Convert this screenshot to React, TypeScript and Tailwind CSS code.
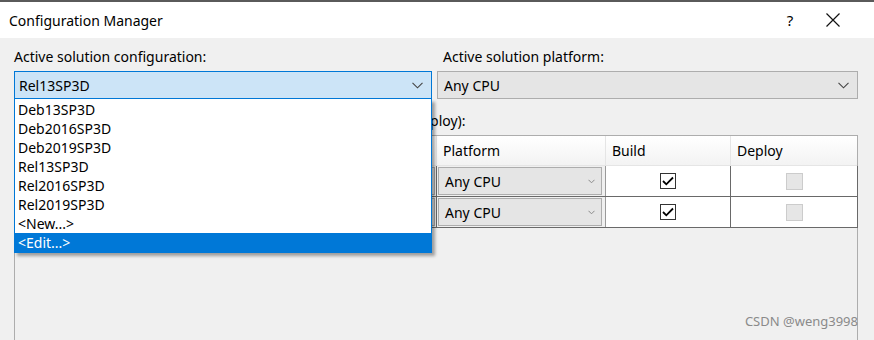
import React from "react";

const font = { fontFamily: '"Noto Sans", "Open Sans", sans-serif' };

function Chevron({ className = "" }: { className?: string }) {
  return (
    <svg width="11" height="7" viewBox="0 0 11 7" className={className}>
      <path d="M0.5 0.8 L5.5 5.8 L10.5 0.8" fill="none" stroke="currentColor" strokeWidth="1.1" />
    </svg>
  );
}

function SmallChevron() {
  return (
    <svg width="7" height="5" viewBox="0 0 7 5" className="text-[#8a8a8a]">
      <path d="M0.5 0.8 L3.5 3.8 L6.5 0.8" fill="none" stroke="currentColor" strokeWidth="1" />
    </svg>
  );
}

function Check() {
  return (
    <div className="w-[16px] h-[16px] border border-[#333] bg-white flex items-center justify-center">
      <svg width="12" height="10" viewBox="0 0 12 10">
        <path d="M1 5 L4.3 8.3 L11 1.5" fill="none" stroke="#000" strokeWidth="1.8" />
      </svg>
    </div>
  );
}

function DisabledBox() {
  return <div className="w-[17px] h-[17px] border border-[#cccccc] bg-[#e6e6e6]" />;
}

const items = ["Deb13SP3D", "Deb2016SP3D", "Deb2019SP3D", "Rel13SP3D", "Rel2016SP3D", "Rel2019SP3D", "<New...>", "<Edit...>"];

function Row() {
  return (
    <div className="flex h-[31px] border-b border-[#696969]">
      <div className="w-[206px] border-r border-[#696969]" />
      <div className="w-[216px] border-r border-[#696969] p-[1px]">
        <div className="h-full border border-[#adadad] bg-[#e5e5e5]" />
      </div>
      <div className="w-[169px] border-r border-[#9a9a9a] pl-[1px] pr-[3px] py-[1px]">
        <div className="h-full border border-[#adadad] bg-[#e5e5e5] flex items-center justify-between pl-[6px] pr-[6px]">
          <span className="text-[14px] text-black">Any CPU</span>
          <SmallChevron />
        </div>
      </div>
      <div className="w-[125px] border-r border-[#696969] bg-white flex items-center justify-center">
        <Check />
      </div>
      <div className="flex-1 bg-white flex items-center justify-center">
        <DisabledBox />
      </div>
    </div>
  );
}

export default function App() {
  return (
    <div className="w-[874px] h-[340px] overflow-hidden bg-[#f0f0f0] relative flex flex-col" style={font}>
      {/* title bar */}
      <div className="h-[38px] bg-white border-t-2 border-[#5a5a5a] flex items-center shrink-0">
        <div className="pl-[9px] text-[14px] text-black flex-1">Configuration Manager</div>
        <div className="text-[15px] text-black w-[20px] mr-[26px] text-center">?</div>
        <svg width="14" height="14" viewBox="0 0 14 14" className="mr-[34px]">
          <path d="M0.5 0.5 L13.5 13.5 M13.5 0.5 L0.5 13.5" stroke="#111" strokeWidth="1.2" />
        </svg>
      </div>

      {/* body */}
      <div className="flex-1 pl-[14px] pr-[16px] pt-[9px] flex flex-col">
        <div className="flex gap-[5px]">
          <div className="w-[418px] relative">
            <div className="h-[20px] text-[14px] text-black leading-[20px]">Active solution configuration:</div>
            <div className="mt-[4px] h-[28px] border border-[#0078d7] bg-[#cce4f7] flex items-center justify-between pl-[4px] pr-[8px]">
              <span className="text-[14px] text-black">Rel13SP3D</span>
              <Chevron className="text-[#444]" />
            </div>
            {/* dropdown */}
            <div className="absolute left-0 top-[52px] w-[418px] bg-white border border-[#0078d7] border-t-0 z-10 shadow-[3px_3px_3px_rgba(0,0,0,0.35)] pt-[1px]">
              {items.map((it, i) => (
                <div
                  key={i}
                  className={
                    "h-[19px] leading-[19px] pl-[3px] text-[14px] " +
                    (i === items.length - 1 ? "bg-[#0078d7] text-white" : "text-black")
                  }
                >
                  {it}
                </div>
              ))}
            </div>
          </div>
          <div className="flex-1">
            <div className="h-[20px] text-[14px] text-black leading-[20px] pl-[6px]">Active solution platform:</div>
            <div className="mt-[4px] h-[28px] border border-[#adadad] bg-[#e5e5e5] flex items-center justify-between pl-[6px] pr-[8px]">
              <span className="text-[14px] text-black">Any CPU</span>
              <Chevron className="text-[#444]" />
            </div>
          </div>
        </div>

        <div className="mt-[12px] h-[20px] leading-[20px] text-[14px] text-black whitespace-nowrap">
          Project contexts (check the project configurations to build or deploy):
        </div>

        <div className="mt-[4px] flex-1 border border-[#adadad] border-b-0 flex flex-col">
          <div className="flex h-[30px] bg-gradient-to-b from-white to-[#f3f3f3] border-b border-[#e5e5e5] text-[14px] text-black">
            <div className="w-[206px] border-r border-[#e5e5e5] pl-[6px] flex items-center">Project</div>
            <div className="w-[216px] border-r border-[#e5e5e5] pl-[6px] flex items-center">Configuration</div>
            <div className="w-[169px] border-r border-[#e5e5e5] pl-[6px] flex items-center">Platform</div>
            <div className="w-[125px] border-r border-[#e5e5e5] pl-[6px] flex items-center">Build</div>
            <div className="flex-1 pl-[6px] flex items-center">Deploy</div>
          </div>
          <div className="border-x border-[#696969] -mx-[1px]">
            <Row />
            <Row />
          </div>
        </div>
      </div>

      <div className="absolute right-[16px] bottom-[12px] text-[13px] text-[#8a8a8a] leading-none">CSDN @weng3998</div>
    </div>
  );
}
